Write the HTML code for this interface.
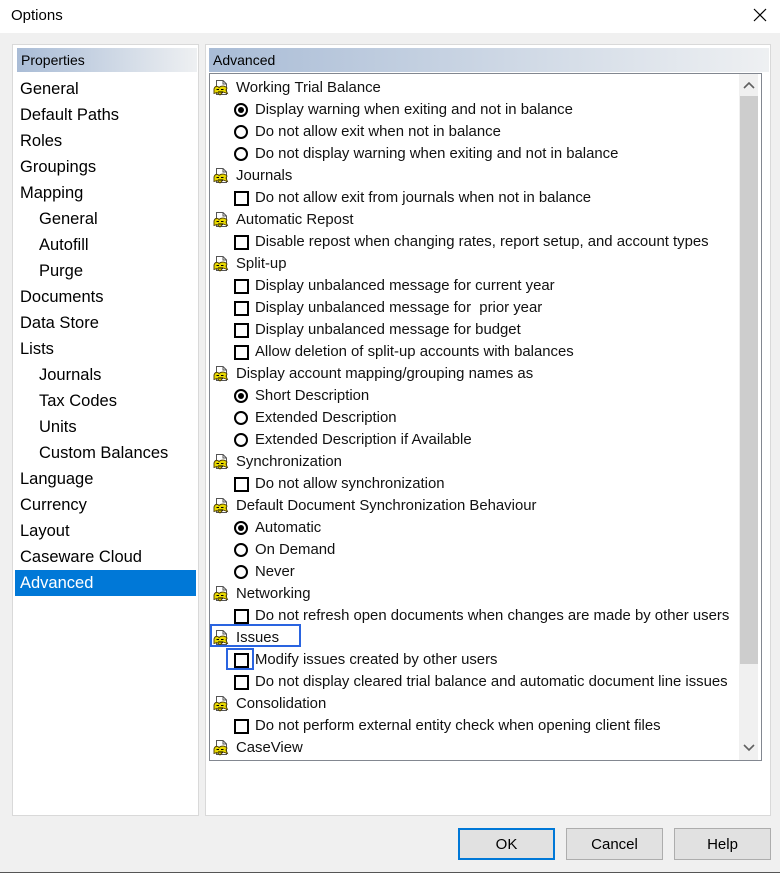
<!DOCTYPE html>
<html><head><style>
*{margin:0;padding:0;box-sizing:border-box}
body{width:780px;height:873px;background:#f0f0f0;position:relative;overflow:hidden;font-family:"Liberation Sans",sans-serif;color:#000}
.abs{position:absolute}
.title{left:0;top:0;width:780px;height:33px;background:#fff}
.panel{background:#fff;border:1px solid #d9d9d9}
.hdr{height:24px;background:linear-gradient(to right,#a9bcd6,#eef0f2);font-size:14px;line-height:24px;padding-left:4px}
.li{position:absolute;font-size:16.5px;line-height:26px;height:26px}
.row{position:absolute;left:0;height:22px;font-size:14.9px;line-height:22px;white-space:nowrap;color:#111}
.ic{position:absolute;left:3px;top:2px}
.box{position:absolute;left:24px;top:4px;width:15px;height:15px;border:2px solid #000}
.rad{position:absolute;left:24px;top:4px;width:14px;height:14px;border:2px solid #000;border-radius:50%}
.rad.on::after{content:"";position:absolute;left:2px;top:2px;width:6px;height:6px;border-radius:50%;background:#000}
.btn{position:absolute;top:828px;width:97px;height:32px;background:#e1e1e1;border:1px solid #adadad;font-size:15px;line-height:32px;text-align:center}
</style></head><body>
<div class="abs title"><div class="abs" style="left:11px;top:7px;font-size:15px">Options</div>
<svg class="abs" style="left:753px;top:8px" width="14" height="14"><path d="M1 1L13 13M13 1L1 13" stroke="#000" stroke-width="1.2"/></svg></div>

<div class="abs panel" style="left:12px;top:44px;width:187px;height:772px">
<div class="hdr" style="margin:3px 0 0 4px;width:180px">Properties</div>
</div>
<div class="li" style="left:20px;top:76px">General</div>
<div class="li" style="left:20px;top:102px">Default Paths</div>
<div class="li" style="left:20px;top:128px">Roles</div>
<div class="li" style="left:20px;top:154px">Groupings</div>
<div class="li" style="left:20px;top:180px">Mapping</div>
<div class="li" style="left:39px;top:206px">General</div>
<div class="li" style="left:39px;top:232px">Autofill</div>
<div class="li" style="left:39px;top:258px">Purge</div>
<div class="li" style="left:20px;top:284px">Documents</div>
<div class="li" style="left:20px;top:310px">Data Store</div>
<div class="li" style="left:20px;top:336px">Lists</div>
<div class="li" style="left:39px;top:362px">Journals</div>
<div class="li" style="left:39px;top:388px">Tax Codes</div>
<div class="li" style="left:39px;top:414px">Units</div>
<div class="li" style="left:39px;top:440px">Custom Balances</div>
<div class="li" style="left:20px;top:466px">Language</div>
<div class="li" style="left:20px;top:492px">Currency</div>
<div class="li" style="left:20px;top:518px">Layout</div>
<div class="li" style="left:20px;top:544px">Caseware Cloud</div>
<div class="li" style="left:15px;top:570px;width:181px;background:#0078d7;color:#fff;padding-left:5px;line-height:27px">Advanced</div>

<div class="abs panel" style="left:205px;top:44px;width:566px;height:772px">
<div class="hdr" style="margin:3px 0 0 3px;width:560px">Advanced</div>
</div>
<div class="abs" style="left:209px;top:73px;width:553px;height:688px;background:#fff;border:1px solid #828790;overflow:hidden">
<div class="abs" style="left:529px;top:0;width:19px;height:686px;background:#f0f0f0"></div>
<div class="abs" style="left:530px;top:22px;width:18px;height:568px;background:#cdcdcd"></div>
<svg class="abs" style="left:533px;top:8px" width="12" height="8"><path d="M1 6L6 1L11 6" stroke="#606060" stroke-width="1.6" fill="none"/></svg>
<svg class="abs" style="left:533px;top:670px" width="12" height="8"><path d="M1 1L6 6L11 1" stroke="#606060" stroke-width="1.6" fill="none"/></svg>
<div id="rows"></div>
</div>
<div class="abs" style="left:210px;top:624px;width:91px;height:23px;border:2px solid #2a64e0"></div>
<div class="abs" style="left:226px;top:648px;width:28px;height:22px;border:2px solid #2a64e0"></div>

<div class="btn" style="left:458px;border:2px solid #0078d7;line-height:30px">OK</div>
<div class="btn" style="left:566px">Cancel</div>
<div class="btn" style="left:674px">Help</div>
<div class="abs" style="left:0;top:872px;width:780px;height:1px;background:#555"></div>

<script>
var ic='<svg class="ic" width="18" height="18" viewBox="0 0 18 18"><path d="M3.5 1.5H10L13.5 5V15.5H3.5Z" fill="#fff" stroke="#555"/><path d="M10 1.5V5H13.5" fill="none" stroke="#555"/><path d="M1 10C2 6.5 5 7 6 8.5C8 6.5 12 6.5 14 9L13 11L14.5 14.5L10 13L7 16L4 13.5L1 14.5Z" fill="#e8d800" stroke="#4a3a00" stroke-width=".9"/><path d="M3.5 10.5h2.5M8 10.5h2.5M5 13h5" stroke="#000" stroke-width="1.1"/></svg>';
var R=[
['h','Working Trial Balance'],['r1','Display warning when exiting and not in balance'],['r','Do not allow exit when not in balance'],['r','Do not display warning when exiting and not in balance'],
['h','Journals'],['c','Do not allow exit from journals when not in balance'],
['h','Automatic Repost'],['c','Disable repost when changing rates, report setup, and account types'],
['h','Split-up'],['c','Display unbalanced message for current year'],['c','Display unbalanced message for  prior year'],['c','Display unbalanced message for budget'],['c','Allow deletion of split-up accounts with balances'],
['h','Display account mapping/grouping names as'],['r1','Short Description'],['r','Extended Description'],['r','Extended Description if Available'],
['h','Synchronization'],['c','Do not allow synchronization'],
['h','Default Document Synchronization Behaviour'],['r1','Automatic'],['r','On Demand'],['r','Never'],
['h','Networking'],['c','Do not refresh open documents when changes are made by other users'],
['h','Issues'],['c','Modify issues created by other users'],['c','Do not display cleared trial balance and automatic document line issues'],
['h','Consolidation'],['c','Do not perform external entity check when opening client files'],
['h','CaseView']];
var h='';R.forEach(function(r,i){var t=3+i*22;
if(r[0]=='h')h+='<div class="row" style="top:'+t+'px">'+ic+'<span style="position:absolute;left:26px">'+r[1].replace(/ /g,'&nbsp;')+'</span></div>';
else h+='<div class="row" style="top:'+t+'px"><div class="'+(r[0]=='c'?'box':(r[0]=='r1'?'rad on':'rad'))+'"></div><span style="position:absolute;left:45px">'+r[1].replace(/  /g,' &nbsp;')+'</span></div>';});
document.getElementById('rows').innerHTML=h;
</script>
</body></html>
